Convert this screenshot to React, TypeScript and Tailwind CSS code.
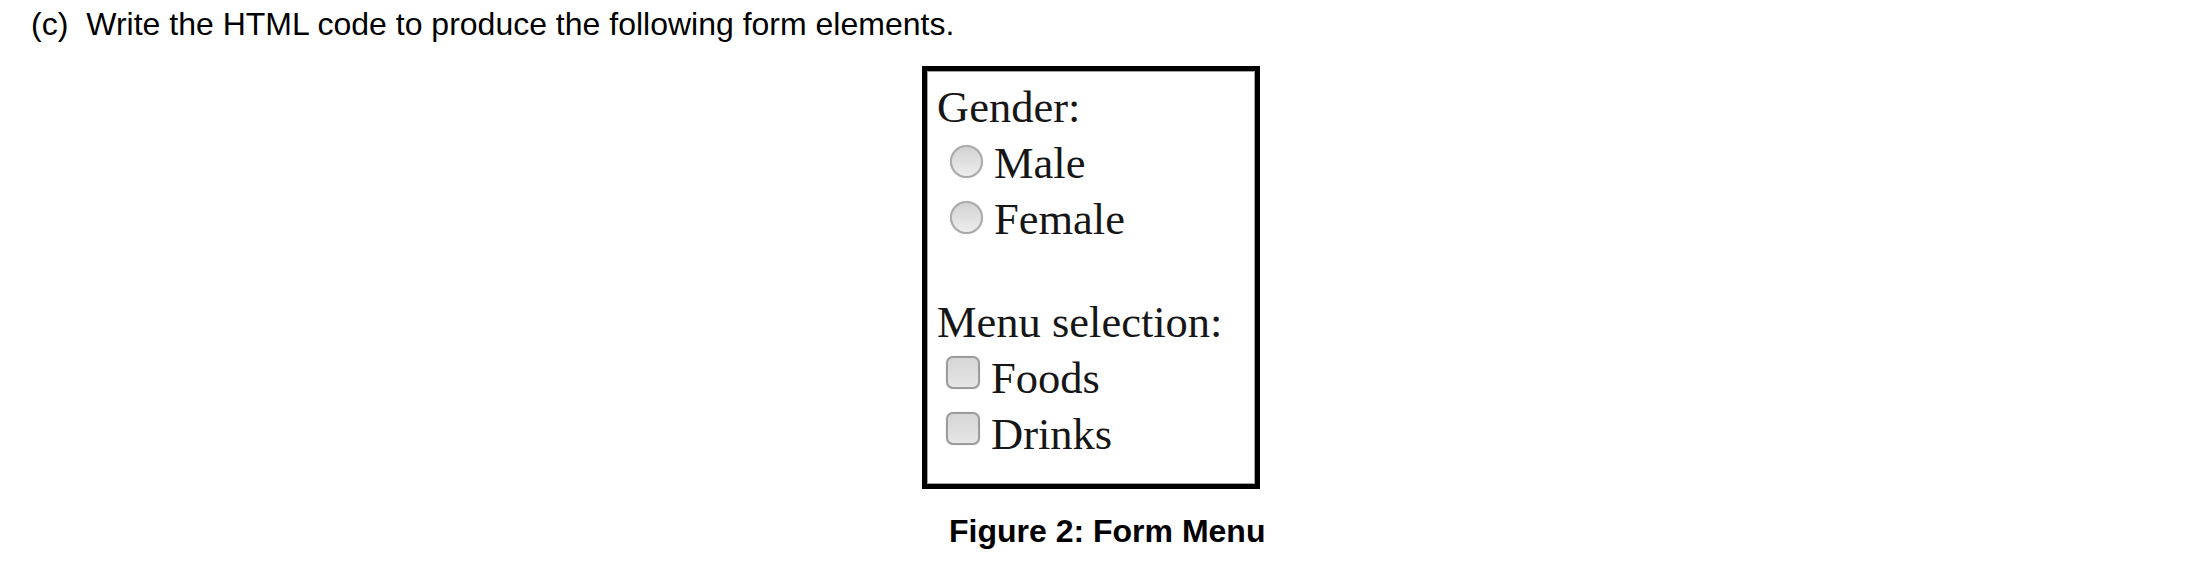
import React from "react";

function Radio() {
  return (
    <span className="inline-block align-baseline w-[33px] h-[33px] ml-[13px] mr-[11px] rounded-full border-2 border-[#aaaaaa] bg-gradient-to-b from-[#d2d2d2] to-[#eeeeee] shadow-[0_0_1px_rgba(0,0,0,0.35)]" />
  );
}

function Checkbox() {
  return (
    <span className="inline-block align-baseline w-[34px] h-[33px] ml-[9px] mr-[11px] mb-[4px] rounded-[7px] border-2 border-[#9c9c9c] bg-gradient-to-b from-[#d6d6d6] to-[#e6e6e6] shadow-[0_0_1px_rgba(0,0,0,0.35)]" />
  );
}

export default function App() {
  return (
    <div className="w-[2202px] h-[573px] bg-white overflow-hidden flex flex-col">
      <div className="pt-[7px] pl-[31px] h-[41px] text-[32px] leading-[34px] text-black font-['Liberation_Sans',Arial,sans-serif] whitespace-nowrap">
        <span>(c)</span>
        <span className="ml-[18px]">Write the HTML code to produce the following form elements.</span>
      </div>
      <div className="mt-[25px] ml-[922px] w-[338px] h-[423px] border-[5px] border-black bg-white">
        <div className="w-full h-full border border-[#a3a3a3] pt-[7px] pl-[9px] text-[44.5px] leading-[56px] text-[#161616] font-['Liberation_Serif','Times_New_Roman',serif] whitespace-nowrap">
          <div className="h-[56px]">Gender:</div>
          <div className="h-[56px]">
            <Radio />
            Male
          </div>
          <div className="h-[56px]">
            <Radio />
            Female
          </div>
          <div className="h-[47px]" />
          <div className="h-[56px]">Menu selection:</div>
          <div className="h-[56px]">
            <Checkbox />
            Foods
          </div>
          <div className="h-[56px]">
            <Checkbox />
            Drinks
          </div>
        </div>
      </div>
      <div className="mt-[25px] ml-[949px] text-[32px] leading-[34px] font-bold text-black font-['Liberation_Sans',Arial,sans-serif] whitespace-nowrap">
        Figure 2: Form Menu
      </div>
    </div>
  );
}
